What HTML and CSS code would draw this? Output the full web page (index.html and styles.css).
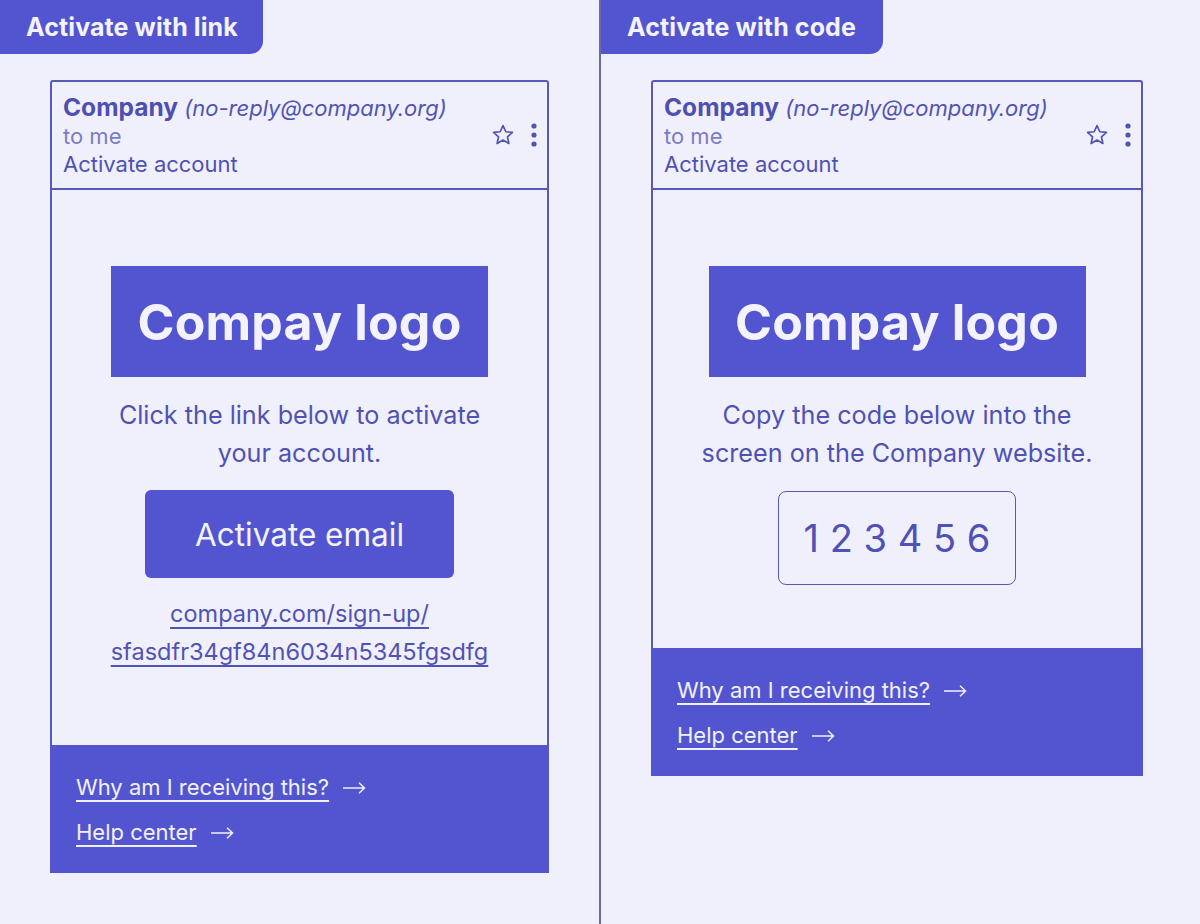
FILE: index.html
```html
<!DOCTYPE html>
<html lang="en">
<head>
<meta charset="utf-8">
<title>Activate account emails</title>
<link rel="stylesheet" href="styles.css">
</head>
<body>
<div class="page">
  <section class="col col-left">
    <div class="tab tab-left">Activate with link</div>
    <div class="card card-left">
      <div class="head">
        <div class="head-text">
          <div class="from"><span class="name">Company</span> <span class="addr">(no-reply@company.org)</span></div>
          <div class="to">to me</div>
          <div class="subject">Activate account</div>
        </div>
        <div class="head-icons">
          <svg class="star" width="24" height="24" viewBox="0 0 24 24"><path d="M12 2.6l2.8 6.15 6.65.7-5 4.45 1.45 6.6L12 17.1l-5.9 3.4 1.45-6.6-5-4.45 6.65-.7z" fill="none" stroke="currentColor" stroke-width="1.7" stroke-linejoin="round"/></svg>
          <svg class="dots" width="6" height="24" viewBox="0 0 6 24"><circle cx="3" cy="3" r="2.6" fill="currentColor"/><circle cx="3" cy="12" r="2.6" fill="currentColor"/><circle cx="3" cy="21" r="2.6" fill="currentColor"/></svg>
        </div>
      </div>
      <div class="body body-left">
        <div class="logo">Compay logo</div>
        <p class="msg">Click the link below to activate<br>your account.</p>
        <div class="btn">Activate email</div>
        <p class="link"><a>company.com/sign-up/</a><br><a>sfasdfr34gf84n6034n5345fgsdfg</a></p>
      </div>
      <div class="foot">
        <div class="foot-row"><a>Why am I receiving this?</a><svg class="arrow" width="23" height="12" viewBox="0 0 23 12"><path d="M0 6h21.5M16 .8L21.5 6 16 11.2" fill="none" stroke="currentColor" stroke-width="1.5"/></svg></div>
        <div class="foot-row"><a>Help center</a><svg class="arrow" width="23" height="12" viewBox="0 0 23 12"><path d="M0 6h21.5M16 .8L21.5 6 16 11.2" fill="none" stroke="currentColor" stroke-width="1.5"/></svg></div>
      </div>
    </div>
  </section>
  <section class="col col-right">
    <div class="tab tab-right">Activate with code</div>
    <div class="card card-right">
      <div class="head">
        <div class="head-text">
          <div class="from"><span class="name">Company</span> <span class="addr">(no-reply@company.org)</span></div>
          <div class="to">to me</div>
          <div class="subject">Activate account</div>
        </div>
        <div class="head-icons">
          <svg class="star" width="24" height="24" viewBox="0 0 24 24"><path d="M12 2.6l2.8 6.15 6.65.7-5 4.45 1.45 6.6L12 17.1l-5.9 3.4 1.45-6.6-5-4.45 6.65-.7z" fill="none" stroke="currentColor" stroke-width="1.7" stroke-linejoin="round"/></svg>
          <svg class="dots" width="6" height="24" viewBox="0 0 6 24"><circle cx="3" cy="3" r="2.6" fill="currentColor"/><circle cx="3" cy="12" r="2.6" fill="currentColor"/><circle cx="3" cy="21" r="2.6" fill="currentColor"/></svg>
        </div>
      </div>
      <div class="body body-right">
        <div class="logo">Compay logo</div>
        <p class="msg">Copy the code below into the<br>screen on the Company website.</p>
        <div class="code">1 2 3 4 5 6</div>
      </div>
      <div class="foot">
        <div class="foot-row"><a>Why am I receiving this?</a><svg class="arrow" width="23" height="12" viewBox="0 0 23 12"><path d="M0 6h21.5M16 .8L21.5 6 16 11.2" fill="none" stroke="currentColor" stroke-width="1.5"/></svg></div>
        <div class="foot-row"><a>Help center</a><svg class="arrow" width="23" height="12" viewBox="0 0 23 12"><path d="M0 6h21.5M16 .8L21.5 6 16 11.2" fill="none" stroke="currentColor" stroke-width="1.5"/></svg></div>
      </div>
    </div>
  </section>
</div>
</body>
</html>
```

FILE: styles.css
```css
* { box-sizing: border-box; }
html, body { margin: 0; padding: 0; }
body {
  background: #f0f0fc;
  font-family: Inter, "Noto Sans", sans-serif;
  color: #4e50b4;
  width: 1200px;
  height: 924px;
  overflow: hidden;
}
.page {
  display: grid;
  grid-template-columns: 599px 601px;
  height: 924px;
}
.col { display: flex; flex-direction: column; align-items: flex-start; }
.col-right { border-left: 2px solid #6b69a6; }

.tab {
  height: 54px;
  background: #5355d0;
  color: #f3f3ff;
  font-weight: 700;
  font-size: 25px;
  line-height: 54px;
  border-bottom-right-radius: 13px;
  letter-spacing: 0.1px;
}
.tab-left { width: 263px; padding-left: 26px; }
.tab-right { width: 282px; padding-left: 26px; }

.card {
  margin-top: 26px;
  border: 2px solid #5759b8;
  border-radius: 3px;
  display: flex;
  flex-direction: column;
}
.card-left { margin-left: 50px; width: 499px; }
.card-right { margin-left: 50px; width: 492px; }

.head {
  display: flex;
  justify-content: space-between;
  align-items: center;
  padding: 11px 10px 10px 11px;
  border-bottom: 2px solid #5759b8;
}
.head-text { font-size: 22px; line-height: 28px; }
.from { white-space: nowrap; }
.name { font-weight: 700; font-size: 24.5px; color: #4d4fb2; }
.addr { font-style: italic; font-size: 22px; color: #5254b4; }
.to { color: #7a7cc6; }
.subject { color: #4f51b3; }
.head-icons {
  display: flex;
  align-items: center;
  gap: 16px;
  margin-top: -2px;
  color: #5254b4;
}
.star { display: block; }
.dots { display: block; }

.body {
  display: flex;
  flex-direction: column;
  align-items: center;
  padding-top: 76px;
}
.body-left { padding-bottom: 74px; }
.body-right { padding-bottom: 63px; }

.logo {
  width: 377px;
  height: 111px;
  background: #5355d0;
  color: #f3f3ff;
  font-weight: 700;
  font-size: 50px;
  letter-spacing: 0.2px;
  display: flex;
  align-items: center;
  justify-content: center;
}
.msg {
  margin: 19px 0 0;
  text-align: center;
  font-size: 25.2px;
  line-height: 38px;
  color: #4f51b3;
}
.btn {
  margin-top: 18px;
  width: 309px;
  height: 88px;
  border-radius: 6px;
  background: #5355d0;
  color: #f3f3ff;
  font-size: 31.5px;
  display: flex;
  align-items: center;
  justify-content: center;
}
.link {
  margin: 17px 0 0;
  text-align: center;
  font-size: 23.5px;
  line-height: 38px;
}
.link a {
  color: #5052b6;
  text-decoration: underline;
  text-decoration-thickness: 1.5px;
  text-underline-offset: 5px;
}
.code {
  margin-top: 19px;
  width: 238px;
  height: 94px;
  border: 1.5px solid #5759b8;
  border-radius: 8px;
  font-size: 38px;
  color: #4f51b6;
  display: flex;
  align-items: center;
  justify-content: center;
}

.foot {
  background: #5355d0;
  color: #f1f1ff;
  padding: 27px 24px 26px 26px;
  display: flex;
  flex-direction: column;
  gap: 15px;
  margin: 0 -2px -2px;
}
.foot-row {
  display: flex;
  align-items: center;
  gap: 14px;
  font-size: 22px;
  line-height: 30px;
}
.foot-row a {
  text-decoration: underline;
  text-decoration-thickness: 1.5px;
  text-underline-offset: 5px;
}
.arrow { display: block; margin-top: 1px; }
```
